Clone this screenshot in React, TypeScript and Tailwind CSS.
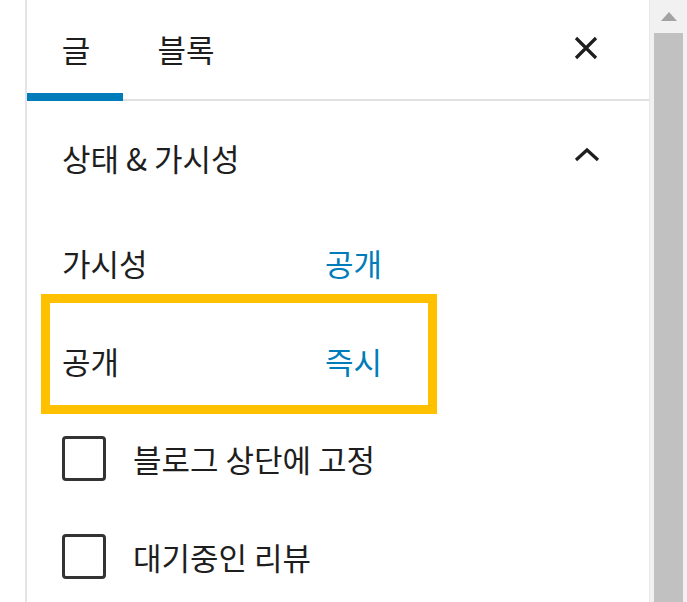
import React from "react";

const font = { fontFamily: '"Noto Sans CJK KR", "Noto Sans", sans-serif' };

function Checkbox() {
  return <span className="block w-[44px] h-[45px] border-[3px] border-[#333] rounded-[4px] bg-white shrink-0" />;
}

export default function App() {
  return (
    <div className="flex w-[687px] h-[602px] bg-white overflow-hidden text-[#1e1e1e]" style={font}>
      <div className="w-[25px] shrink-0" />
      <div className="flex-1 flex flex-col border-l-2 border-[#e4e4e4] min-w-0">
        {/* Tabs */}
        <div className="h-[101px] shrink-0 flex items-stretch border-b-2 border-[#e0e0e0]">
          <div className="relative w-[96px] flex items-center justify-center text-[31px] leading-none pb-[3px]">
            <span className="pl-[2px]">글</span>
            <span className="absolute left-0 right-0 bottom-[-2px] h-[8px] bg-[#007cba]" />
          </div>
          <div className="w-[126px] flex items-center justify-center text-[31px] leading-none pb-[3px]">
            <span>블록</span>
          </div>
          <div className="flex-1" />
          <div className="w-[126px] flex items-center justify-center pb-[3px]">
            <svg width="24" height="24" viewBox="0 0 24 24" className="ml-[-1px]">
              <path d="M2 2 L22 22 M22 2 L2 22" stroke="#1e1e1e" strokeWidth="3.2" fill="none" />
            </svg>
          </div>
        </div>
        {/* Section header */}
        <div className="h-[112px] shrink-0 flex items-center justify-between pl-[35px] pr-[50px]">
          <span className="text-[31px] leading-none">상태 &amp; 가시성</span>
          <svg width="26" height="16" viewBox="0 0 26 16" className="mr-[-1px] mt-[-4px]">
            <path d="M2 13 L13 3 L24 13" stroke="#1e1e1e" strokeWidth="3.2" fill="none" />
          </svg>
        </div>
        {/* Rows */}
        <div className="h-[98px] shrink-0 flex items-center pl-[35px]">
          <span className="w-[263px] text-[31px] leading-none">가시성</span>
          <span className="text-[31px] leading-none text-[#007cba]">공개</span>
        </div>
        <div className="relative h-[98px] shrink-0 flex items-center pl-[35px]">
          <span className="w-[263px] text-[31px] leading-none">공개</span>
          <span className="text-[31px] leading-none text-[#007cba]">즉시</span>
          <div className="absolute left-[14px] top-[-17px] w-[396px] h-[120px] border-[9px] border-[#ffc000]" />
        </div>
        <div className="h-[98px] shrink-0 flex items-center pl-[35px] gap-[27px]">
          <Checkbox />
          <span className="text-[31px] leading-none">블로그 상단에 고정</span>
        </div>
        <div className="h-[98px] shrink-0 flex items-center pl-[35px] gap-[27px]">
          <Checkbox />
          <span className="text-[31px] leading-none">대기중인 리뷰</span>
        </div>
      </div>
      {/* Scrollbar */}
      <div className="w-[38px] shrink-0 bg-[#f1f1f1] border-l border-[#e8e8e8] flex flex-col items-center">
        <div className="h-[33px] w-full flex items-center justify-center">
          <svg width="16" height="9" viewBox="0 0 16 9">
            <path d="M0 9 L8 0 L16 9 Z" fill="#a3a3a3" />
          </svg>
        </div>
        <div className="w-[29px] flex-1 bg-[#c1c1c1]" />
      </div>
    </div>
  );
}
